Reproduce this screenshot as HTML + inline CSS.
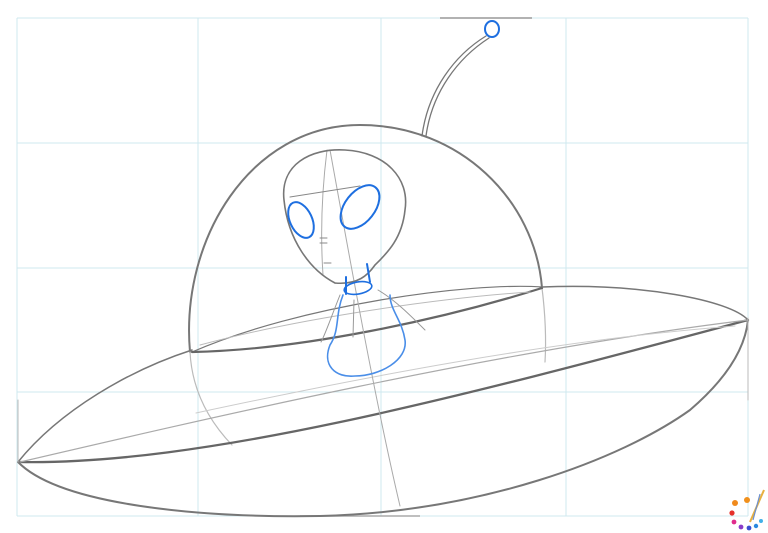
<!DOCTYPE html>
<html><head><style>html,body{margin:0;padding:0;background:#fff;width:768px;height:533px;overflow:hidden}</style></head>
<body>
<svg width="768" height="533" viewBox="0 0 768 533" xmlns="http://www.w3.org/2000/svg">
<g stroke="#cfe9ef" stroke-width="1" fill="none">
<line x1="17" y1="18" x2="748" y2="18"/><line x1="17" y1="143" x2="748" y2="143"/><line x1="17" y1="268" x2="748" y2="268"/><line x1="17" y1="392" x2="748" y2="392"/><line x1="17" y1="516" x2="748" y2="516"/>
<line x1="17" y1="18" x2="17" y2="516"/><line x1="198" y1="18" x2="198" y2="516"/><line x1="381" y1="18" x2="381" y2="516"/><line x1="566" y1="18" x2="566" y2="516"/><line x1="748" y1="18" x2="748" y2="516"/>
</g>
<line x1="440" y1="18" x2="532" y2="18" stroke="#999" stroke-width="1.5"/>
<line x1="300" y1="516" x2="420" y2="516" stroke="#aaa" stroke-width="1.5"/>
<g fill="none" stroke="#777" stroke-linecap="round">
<path d="M422 136 C428 90 455 55 486 36" stroke-width="1.3"/>
<path d="M426 136 C432 92 458 58 489 38" stroke-width="1.3"/>
<path d="M190 352 C180 240 250 125 360 125 C460 125 535 200 542 288" stroke-width="2"/>
<path d="M542 288 C546 320 546 345 545 362" stroke="#bbb" stroke-width="1.2"/>
<path d="M190 352 C192 390 208 420 232 445" stroke="#bbb" stroke-width="1.2"/>
<path d="M192 352 C300 305 470 282 542 287" stroke-width="1.2"/>
<path d="M192 352 C300 350 440 320 542 288" stroke="#666" stroke-width="2.2"/>
<path d="M200 345 C300 318 440 298 530 292" stroke="#bbb" stroke-width="1"/>
<path d="M18 462 C60 410 130 370 192 350" stroke-width="1.5"/>
<path d="M542 287 C640 283 730 300 748 320" stroke-width="1.5"/>
<path d="M18 462 C60 505 200 518 320 516 C480 512 620 460 690 410 C725 380 745 350 748 320" stroke-width="2"/>
<path d="M20 462 C200 465 450 400 748 320" stroke="#666" stroke-width="2.3"/>
<path d="M20 462 C200 420 500 350 748 320" stroke="#aaa" stroke-width="1.2"/>
<path d="M196 413 C350 380 550 340 735 326" stroke="#ccc" stroke-width="1"/>
<line x1="748" y1="318" x2="748" y2="400" stroke="#bbb"/>
<line x1="18" y1="400" x2="18" y2="462" stroke="#bbb"/>
<path d="M330 150 C350 260 375 400 400 506" stroke="#aaa" stroke-width="1"/>
<path d="M327 150 C322 190 320 230 323 275" stroke="#aaa" stroke-width="1"/>
<path d="M335 283 C310 270 288 240 284 200 C280 165 310 148 345 150 C385 152 410 178 405 210 C402 240 385 255 375 265 C368 275 358 285 335 283" stroke-width="1.6"/>
<line x1="290" y1="197" x2="360" y2="186" stroke="#888" stroke-width="1"/>
<g stroke="#888" stroke-width="1"><line x1="320" y1="238" x2="327" y2="238"/><line x1="320" y1="243" x2="327" y2="243"/><line x1="324" y1="263" x2="331" y2="263"/></g>
<path d="M340 295 C330 320 325 335 321 342" stroke="#999" stroke-width="1"/>
<path d="M378 290 C395 300 410 315 425 330" stroke="#999" stroke-width="1"/>
<line x1="354" y1="300" x2="353" y2="337" stroke="#999"/>
</g>
<g fill="none" stroke="#1e6fe0" stroke-width="2" stroke-linecap="round">
<ellipse cx="492" cy="29" rx="7" ry="8"/>
<ellipse cx="301" cy="220" rx="11" ry="19" transform="rotate(-25 301 220)"/>
<ellipse cx="360" cy="207" rx="15" ry="25" transform="rotate(38 360 207)"/>
<path d="M346 277 L346 294"/>
<path d="M367 264 L370 282"/>
<ellipse cx="358" cy="288" rx="14" ry="6" transform="rotate(-10 358 288)" stroke-width="1.6"/>
<path d="M343 295 C335 315 340 330 330 345 C322 365 335 378 355 376 C380 376 408 360 405 340 C402 320 390 310 390 295" stroke-width="1.6" stroke="#4a8ee8"/>
</g>
<g>
<circle cx="735" cy="503" r="3" fill="#f08a1c"/><circle cx="747" cy="500" r="3" fill="#f0901c"/>
<circle cx="732" cy="513" r="2.6" fill="#e6302a"/><circle cx="734" cy="522" r="2.4" fill="#e02c8c"/>
<circle cx="741" cy="527" r="2.4" fill="#8a3cc8"/><circle cx="749" cy="528" r="2.4" fill="#3b4fd0"/>
<circle cx="756" cy="526" r="2.2" fill="#2b8ae0"/><circle cx="761" cy="521" r="2" fill="#40b0e8"/>
<line x1="764" y1="490" x2="750" y2="522" stroke="#e8b040" stroke-width="2"/>
<line x1="760" y1="494" x2="753" y2="520" stroke="#6a8fd0" stroke-width="1.2"/>
</g>
</svg>
</body></html>
